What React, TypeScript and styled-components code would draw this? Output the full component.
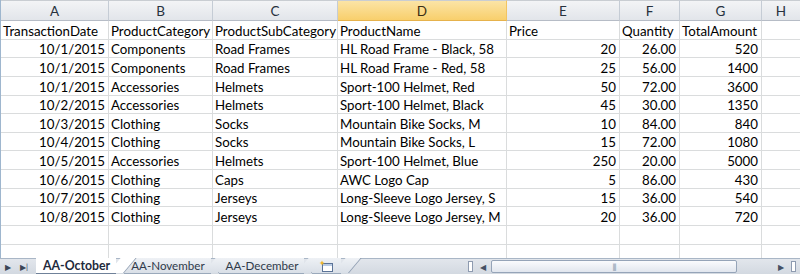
import styled, { createGlobalStyle, css } from 'styled-components';

const GlobalStyle = createGlobalStyle`
    html, body {
        margin: 0;
        padding: 0;
        background: #ffffff;
    }
    body {
        width: 800px;
        height: 274px;
        overflow: hidden;
        font-family: Lato, "Open Sans", sans-serif;
    }
`;

const COLS = [108, 104, 125, 169, 113, 60, 82, 39];
const LETTERS = ['A', 'B', 'C', 'D', 'E', 'F', 'G', 'H'];
const ALIGN: ('l' | 'r')[] = ['r', 'l', 'l', 'l', 'r', 'r', 'r', 'l'];

const rows: string[][] = [
    ['10/1/2015', 'Components', 'Road Frames', 'HL Road Frame - Black, 58', '20', '26.00', '520'],
    ['10/1/2015', 'Components', 'Road Frames', 'HL Road Frame - Red, 58', '25', '56.00', '1400'],
    ['10/1/2015', 'Accessories', 'Helmets', 'Sport-100 Helmet, Red', '50', '72.00', '3600'],
    ['10/2/2015', 'Accessories', 'Helmets', 'Sport-100 Helmet, Black', '45', '30.00', '1350'],
    ['10/3/2015', 'Clothing', 'Socks', 'Mountain Bike Socks, M', '10', '84.00', '840'],
    ['10/4/2015', 'Clothing', 'Socks', 'Mountain Bike Socks, L', '15', '72.00', '1080'],
    ['10/5/2015', 'Accessories', 'Helmets', 'Sport-100 Helmet, Blue', '250', '20.00', '5000'],
    ['10/6/2015', 'Clothing', 'Caps', 'AWC Logo Cap', '5', '86.00', '430'],
    ['10/7/2015', 'Clothing', 'Jerseys', 'Long-Sleeve Logo Jersey, S', '15', '36.00', '540'],
    ['10/8/2015', 'Clothing', 'Jerseys', 'Long-Sleeve Logo Jersey, M', '20', '36.00', '720'],
];
const fields = ['TransactionDate', 'ProductCategory', 'ProductSubCategory', 'ProductName', 'Price', 'Quantity', 'TotalAmount', ''];

const Window = styled.div`
    display: flex;
    flex-direction: column;
    width: 800px;
    height: 274px;
`;

const Grid = styled.div`
    flex: 0 0 258px;
    overflow: hidden;
    display: grid;
    grid-template-columns: ${COLS.map(c => c + 'px').join(' ')};
    grid-auto-rows: 18.64px;
    grid-template-rows: 21px;
    border-left: 1px solid #9eb6ce;
    box-sizing: border-box;
`;

const ColHead = styled.div<{ $active?: boolean }>`
    display: flex;
    align-items: center;
    justify-content: center;
    font-size: 13.5px;
    color: #27313d;
    border-right: 1px solid #c5ccd5;
    border-bottom: 1px solid #b6bcc6;
    border-top: 1px solid #c9cdd2;
    background: linear-gradient(#f3f4f6, #e2e5ea);
    ${p => p.$active && css`
        background: linear-gradient(#fbe4a6, #f8cf6c);
        border-right-color: #f2c461;
        border-bottom-color: #e6b24c;
        color: #3a2e14;
    `}
`;

const Cell = styled.div<{ $align: 'l' | 'r' }>`
    display: flex;
    align-items: flex-end;
    justify-content: ${p => (p.$align === 'r' ? 'flex-end' : 'flex-start')};
    padding: 0 3px 0 2px;
    font-size: 13.3px;
    line-height: 15px;
    color: #000;
    white-space: nowrap;
    border-right: 1px solid #dadcdd;
    border-bottom: 1px solid #dadcdd;
    box-sizing: border-box;
`;

const TabBar = styled.div`
    flex: 1;
    display: flex;
    align-items: stretch;
    background: linear-gradient(#e2e6ec, #d3d9e1);
    border-top: 1px solid #a9b6c6;
    font-size: 11.6px;
    color: #2f3a4a;
`;

const Nav = styled.div`
    display: flex;
    align-items: center;
    gap: 9px;
    padding: 0 8px 0 5px;
    font-size: 8px;
    color: #3b4555;
`;

const Tab = styled.div<{ $active?: boolean }>`
    position: relative;
    display: flex;
    align-items: center;
    padding: 0 6px 0 7px;
    margin-right: 8px;
    background: linear-gradient(#eef1f5, #d9dfe7);
    border-bottom: 1px solid #9aa9bb;
    margin-top: -1px;
    &::after {
        content: '';
        position: absolute;
        top: 0;
        right: -8px;
        width: 15px;
        height: 100%;
        background: inherit;
        border-right: 1px solid #8d9cb0;
        transform: skewX(-40deg);
        transform-origin: bottom left;
    }
    ${p => p.$active && css`
        background: #ffffff;
        font-size: 12.3px;
        font-weight: 700;
        color: #1e2a3c;
        border-bottom: 1px solid #6f8199;
        z-index: 2;
    `}
`;

const Spacer = styled.div`
    flex: 1;
`;

const Splitter = styled.div`
    width: 3px;
    margin: 2px 4px;
    border: 1px solid #8e9bb0;
    background: #fff;
`;

const Arrow = styled.div`
    width: 12px;
    display: flex;
    align-items: center;
    justify-content: center;
    font-size: 8px;
    color: #445064;
`;

const Thumb = styled.div`
    width: 244px;
    margin: 1px 0 1px 2px;
    border: 1px solid #95a4b8;
    border-radius: 2px;
    background: linear-gradient(#fafbfd, #e1e6ee);
    display: flex;
    align-items: center;
    justify-content: center;
    font-size: 7px;
    letter-spacing: -1px;
    color: #8090a8;
`;

const Track = styled.div`
    width: 38px;
`;

function NewSheetIcon() {
    return (
        <svg width="16" height="12" viewBox="0 0 16 12">
            <rect x="3.5" y="3.5" width="10" height="8" fill="#fff" stroke="#5b7397" />
            <path d="M4 4h9v2H4z" fill="#b9cbe4" />
            <path d="M3 0.5l0.8 1.7 1.7 0.8-1.7 0.8L3 5.5 2.2 3.8 0.5 3l1.7-0.8z" fill="#f2b624" />
        </svg>
    );
}

export default function App() {
    return (
        <Window>
            <GlobalStyle />
            <Grid>
                {LETTERS.map(l => (
                    <ColHead key={l} $active={l === 'D'}>{l}</ColHead>
                ))}
                {fields.map((f, i) => (
                    <Cell key={'f' + i} $align="l">{f}</Cell>
                ))}
                {rows.map((r, ri) =>
                    COLS.map((_, ci) => (
                        <Cell key={ri + '-' + ci} $align={ALIGN[ci]}>{r[ci] ?? ''}</Cell>
                    ))
                )}
                {[0, 1].map(ri =>
                    COLS.map((_, ci) => <Cell key={'e' + ri + ci} $align="l" />)
                )}
            </Grid>
            <TabBar>
                <Nav>
                    <span>▶</span>
                    <span>▶|</span>
                </Nav>
                <Tab $active>AA-October</Tab>
                <Tab>AA-November</Tab>
                <Tab>AA-December</Tab>
                <Tab><NewSheetIcon /></Tab>
                <Spacer />
                <Splitter />
                <Arrow>◀</Arrow>
                <Thumb>||||</Thumb>
                <Track />
                <Arrow>▶</Arrow>
                <Splitter />
            </TabBar>
        </Window>
    );
}
